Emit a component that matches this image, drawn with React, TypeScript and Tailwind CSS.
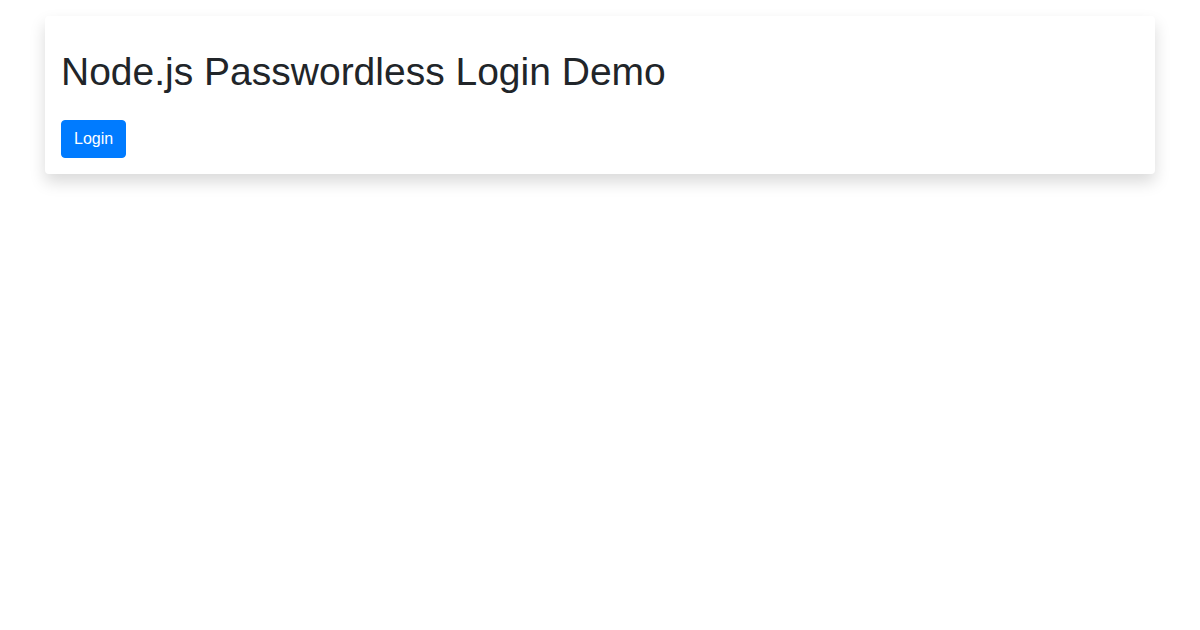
export default function App() {
  return (
    <div className="min-h-[630px] bg-white font-['Liberation_Sans',Arial,sans-serif] text-[#212529]">
      <div className="mx-auto w-[1110px] pt-4">
        <div className="rounded bg-white px-4 pt-8 pb-4 shadow-[0_8px_16px_rgba(0,0,0,0.15)]">
          <h1 className="mb-6 text-[39px] leading-[48px] font-normal">
            Node.js Passwordless Login Demo
          </h1>
          <button className="rounded border border-[#007bff] bg-[#007bff] px-3 py-1.5 text-base leading-6 text-white">
            Login
          </button>
        </div>
      </div>
    </div>
  )
}
